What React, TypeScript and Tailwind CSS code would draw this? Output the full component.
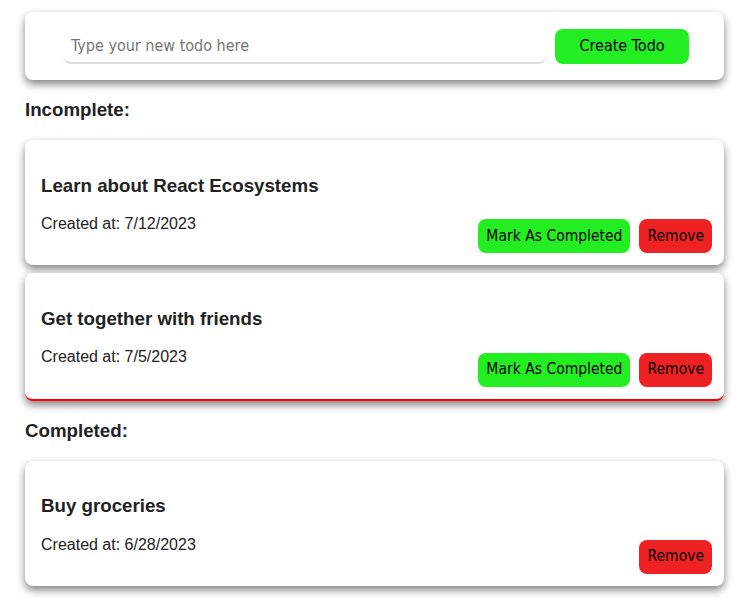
import React from "react";

interface Todo {
  text: string;
  createdAt: string;
  isCompleted: boolean;
  warning?: boolean;
}

const todos: Todo[] = [
  { text: "Learn about React Ecosystems", createdAt: "7/12/2023", isCompleted: false },
  { text: "Get together with friends", createdAt: "7/5/2023", isCompleted: false, warning: true },
  { text: "Buy groceries", createdAt: "6/28/2023", isCompleted: true },
];

const uiFont = "font-['DejaVu_Sans_Condensed','DejaVu_Sans',sans-serif] [font-stretch:condensed]";

function TodoListItem({ todo }: { todo: Todo }) {
  return (
    <div
      className={`mt-2 flex items-end justify-between rounded-lg bg-white pt-4 pb-3 pl-4 pr-3 shadow-[0_4px_8px_grey] ${
        todo.warning ? "border-b-2 border-[red]" : ""
      }`}
    >
      <div className="pb-1">
        <h3 className="my-[18.72px] text-[18.72px] font-bold leading-[21.5px]">{todo.text}</h3>
        <p className="mb-4 text-base leading-[18.4px]">Created at: {todo.createdAt}</p>
      </div>
      <div className="flex gap-[9px]">
        {!todo.isCompleted && (
          <button className={`${uiFont} h-[34px] cursor-pointer rounded-lg bg-[#22ee22] px-2 text-[15.5px] text-black`}>
            Mark As Completed
          </button>
        )}
        <button className={`${uiFont} h-[34px] cursor-pointer rounded-lg bg-[#ee2222] px-2 text-[15.5px] text-black`}>
          Remove
        </button>
      </div>
    </div>
  );
}

export default function App() {
  const incomplete = todos.filter((t) => !t.isCompleted);
  const completed = todos.filter((t) => t.isCompleted);

  return (
    <div className="min-h-screen bg-white px-[25px] pt-3 font-['Liberation_Sans',Arial,sans-serif] text-[#222222]">
      <div className="w-[699px]">
        <div className="flex items-center justify-center gap-[9px] rounded-lg bg-white p-4 pl-[19px] shadow-[0_4px_8px_grey]">
          <input
            type="text"
            placeholder="Type your new todo here"
            className={`${uiFont} h-[36px] w-[483px] rounded-lg border-b-2 border-[#ddd] px-2 text-base outline-none placeholder:text-[#757575]`}
          />
          <button className={`${uiFont} h-[35px] w-[134px] cursor-pointer rounded-lg bg-[#22ee22] px-2 text-base text-black`}>
            Create Todo
          </button>
        </div>

        <h3 className="my-[19px] text-[18.72px] font-bold leading-[22px]">Incomplete:</h3>
        {incomplete.map((todo) => (
          <TodoListItem key={todo.text} todo={todo} />
        ))}

        <h3 className="my-[19px] text-[18.72px] font-bold leading-[22px]">Completed:</h3>
        {completed.map((todo) => (
          <TodoListItem key={todo.text} todo={todo} />
        ))}
      </div>
    </div>
  );
}
